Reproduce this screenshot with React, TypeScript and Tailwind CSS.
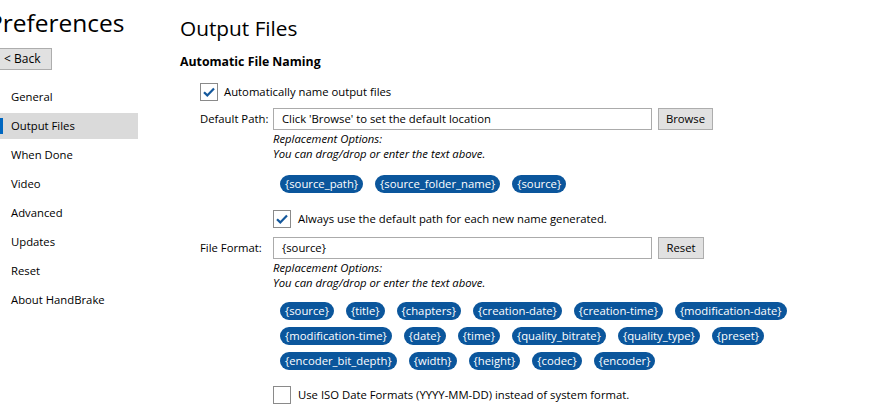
import React from "react";

const navItems = [
  "General",
  "Output Files",
  "When Done",
  "Video",
  "Advanced",
  "Updates",
  "Reset",
  "About HandBrake",
];

const pathTokens = ["{source_path}", "{source_folder_name}", "{source}"];

const formatRows = [
  ["{source}", "{title}", "{chapters}", "{creation-date}", "{creation-time}", "{modification-date}"],
  ["{modification-time}", "{date}", "{time}", "{quality_bitrate}", "{quality_type}", "{preset}"],
  ["{encoder_bit_depth}", "{width}", "{height}", "{codec}", "{encoder}"],
];

function CheckBox({ checked }: { checked: boolean }) {
  return (
    <div className="flex h-[18px] w-[18px] shrink-0 items-center justify-center border border-[#8a8a8a] bg-white">
      {checked && (
        <svg width="12" height="10" viewBox="0 0 12 10">
          <path d="M1 5.2 L4.3 8.4 L11 1.4" fill="none" stroke="#14589c" strokeWidth="2.2" />
        </svg>
      )}
    </div>
  );
}

function Chip({ label }: { label: string }) {
  return (
    <span className="flex h-[18px] items-center rounded-full bg-[#0b569c] px-[5px] text-white">
      {label}
    </span>
  );
}

function Hint() {
  return (
    <div className="mt-[1px] pl-[73px] italic leading-[15px]">
      <div>Replacement Options:</div>
      <div>You can drag/drop or enter the text above.</div>
    </div>
  );
}

export default function App() {
  return (
    <div
      className="flex h-[410px] w-[872px] overflow-hidden bg-white text-[11.3px] text-black"
      style={{ fontFamily: '"Open Sans", "Noto Sans", sans-serif' }}
    >
      {/* Sidebar */}
      <div className="flex w-[180px] shrink-0 flex-col">
        <h1 className="-ml-[12px] pt-[6px] text-[24.5px] leading-[34px]">Preferences</h1>
        <button className="-ml-[2px] mt-[8px] flex h-[22px] w-[54px] items-center border border-[#adadad] bg-[#e1e1e1] pl-[5px] text-[12px]">
          &lt; Back
        </button>
        <nav className="mt-[14px] flex flex-col gap-[3px]">
          {navItems.map((item) => {
            const selected = item === "Output Files";
            return (
              <div
                key={item}
                className={
                  selected
                    ? "flex h-[26px] w-[138px] items-center bg-[#dadada]"
                    : "flex h-[26px] w-[138px] items-center"
                }
              >
                <div className={selected ? "h-[16px] w-[3px] bg-[#0067c0]" : "h-[16px] w-[3px]"} />
                <span className="ml-[8px]">{item}</span>
              </div>
            );
          })}
        </nav>
      </div>

      {/* Main */}
      <div className="flex flex-1 flex-col pt-[13px]">
        <h2 className="text-[20.8px] leading-[30px]">Output Files</h2>
        <h3 className="mt-[10px] text-[12.3px] font-bold leading-[18px]">Automatic File Naming</h3>

        <div className="ml-[20px] flex flex-col">
          <label className="mt-[12px] flex items-center gap-[6px]">
            <CheckBox checked />
            <span>Automatically name output files</span>
          </label>

          <div className="mt-[7px] flex items-center">
            <span className="w-[73px]">Default Path:</span>
            <div className="flex h-[22px] w-[379px] items-center border border-[#ababab] pl-[8px]">
              Click 'Browse' to set the default location
            </div>
            <button className="ml-[6px] flex h-[22px] w-[55px] items-center justify-center border border-[#adadad] bg-[#e1e1e1]">
              Browse
            </button>
          </div>
          <Hint />

          <div className="mt-[14px] flex gap-[12px] pl-[80px]">
            {pathTokens.map((t) => (
              <Chip key={t} label={t} />
            ))}
          </div>

          <label className="mt-[17px] flex items-center gap-[7px] pl-[73px]">
            <CheckBox checked />
            <span>Always use the default path for each new name generated.</span>
          </label>

          <div className="mt-[9px] flex items-center">
            <span className="w-[73px]">File Format:</span>
            <div className="flex h-[22px] w-[379px] items-center border border-[#ababab] pl-[8px]">
              {"{source}"}
            </div>
            <button className="ml-[6px] flex h-[22px] w-[46px] items-center justify-center border border-[#adadad] bg-[#e1e1e1]">
              Reset
            </button>
          </div>
          <Hint />

          <div className="mt-[12px] flex flex-col gap-[7px] pl-[80px]">
            {formatRows.map((row, i) => (
              <div key={i} className="flex gap-[12px]">
                {row.map((t) => (
                  <Chip key={t} label={t} />
                ))}
              </div>
            ))}
          </div>

          <label className="mt-[16px] flex items-center gap-[7px] pl-[73px]">
            <CheckBox checked={false} />
            <span>Use ISO Date Formats (YYYY-MM-DD) instead of system format.</span>
          </label>
        </div>
      </div>
    </div>
  );
}
